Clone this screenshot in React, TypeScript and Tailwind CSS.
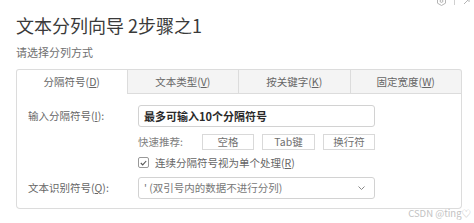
import React from "react";

const tabs = [
  { label: "分隔符号", key: "D" },
  { label: "文本类型", key: "V" },
  { label: "按关键字", key: "K" },
  { label: "固定宽度", key: "W" },
];

const quick = [
  { label: "空格", w: "w-[52px]" },
  { label: "Tab键", w: "w-[53px]" },
  { label: "换行符", w: "w-[52px]" },
];

export default function App() {
  return (
    <div className="relative h-[223px] w-[474px] overflow-hidden bg-white font-['Noto_Sans_CJK_SC',sans-serif] text-[#666]">
      {/* top right window controls, cut off */}
      <div className="absolute right-[4px] top-[-4px] flex items-center gap-[8px] text-[#b5b5b5]">
        <svg width="9" height="10" viewBox="0 0 9 10" fill="none" stroke="currentColor" strokeWidth="1">
          <path d="M4.5 0.5 L8.5 2.8 L8.5 7.2 L4.5 9.5 L0.5 7.2 L0.5 2.8 Z" />
          <circle cx="4.5" cy="5" r="1.4" />
        </svg>
        <div className="h-[7px] w-px bg-[#d0d0d0]" />
        <svg width="7" height="8" viewBox="0 0 7 8" fill="none" stroke="currentColor" strokeWidth="1">
          <path d="M1 7 L6 2 M2.5 1.5 L6 1.5 L6 5" />
        </svg>
      </div>

      <div className="pl-4 pt-[13px]">
        <h1 className="text-[18px] leading-[24px] text-[#3a3a3a]">文本分列向导 2步骤之1</h1>
        <p className="mt-[7px] text-[11px] leading-[16px] text-[#707070]">请选择分列方式</p>

        <div className="mt-[9px] w-[446px]">
          <div className="grid h-[25px] grid-cols-4">
            {tabs.map((t, i) => (
              <div
                key={t.key}
                className={
                  i === 0
                    ? "flex items-center justify-center rounded-tl-[3px] border-l border-r border-t border-[#dcdcdc] bg-white text-[10.5px]"
                    : "flex items-center justify-center border-b border-r border-t border-[#dcdcdc] bg-[#f4f4f4] text-[10.5px] last:rounded-tr-[3px]"
                }
              >
                {t.label}(<span className="underline">{t.key}</span>)
              </div>
            ))}
          </div>

          <div className="rounded-b-[4px] border-b border-l border-r border-[#dcdcdc] pb-[9px] pl-[11px] pt-[11px] text-[10.5px]">
            <div className="flex h-[22px] items-center">
              <div className="w-[110px]">
                输入分隔符号(<span className="underline">I</span>):
              </div>
              <div className="flex h-[22px] w-[237px] items-center rounded-[3px] border border-[#d2d2d2] px-[5px] text-[11px] font-semibold text-[#2a2a2a]">
                最多可输入10个分隔符号
              </div>
            </div>

            <div className="ml-[110px] mt-[7px] flex h-[16px] items-center">
              <div className="w-[64px] text-[#808080]">快速推荐:</div>
              <div className="flex gap-[8px]">
                {quick.map((q) => (
                  <div
                    key={q.label}
                    className={`flex h-[16px] items-center justify-center border border-[#d9d9d9] text-[#707070] ${q.w}`}
                  >
                    {q.label}
                  </div>
                ))}
              </div>
            </div>

            <div className="ml-[110px] mt-[7px] flex h-[11px] items-center gap-[6px]">
              <div className="flex h-[11px] w-[11px] items-center justify-center rounded-[2px] border border-[#999]">
                <svg width="7" height="6" viewBox="0 0 7 6" fill="none" stroke="#555" strokeWidth="1.1">
                  <path d="M0.8 3 L2.7 4.9 L6.2 1" />
                </svg>
              </div>
              <span>
                连续分隔符号视为单个处理(<span className="underline">R</span>)
              </span>
            </div>

            <div className="mt-[9px] flex h-[22px] items-center">
              <div className="w-[110px]">
                文本识别符号(<span className="underline">Q</span>):
              </div>
              <div className="flex h-[22px] w-[237px] items-center justify-between rounded-[3px] border border-[#d2d2d2] pl-[5px] pr-[9px] text-[#777]">
                <span>' (双引号内的数据不进行分列)</span>
                <svg width="7" height="4" viewBox="0 0 7 4" fill="none" stroke="#888" strokeWidth="1">
                  <path d="M0.5 0.5 L3.5 3.5 L6.5 0.5" />
                </svg>
              </div>
            </div>
          </div>
        </div>
      </div>

      <div className="absolute right-[3px] top-[207px] text-[9.5px] leading-[12px] text-[#c2c2c2]">CSDN @ting♡</div>
    </div>
  );
}
